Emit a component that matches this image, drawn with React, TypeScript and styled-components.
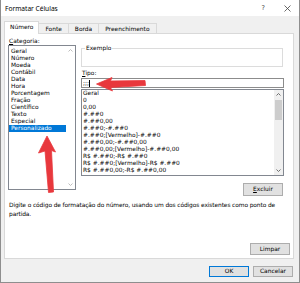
import React from "react";
import styled, { createGlobalStyle } from "styled-components";

const GlobalStyle = createGlobalStyle`
  *, *::before, *::after { box-sizing: border-box; }
  html, body { margin: 0; padding: 0; background: #fff; }
  body {
    font-family: "DejaVu Sans", "Noto Sans", sans-serif;
    font-size: 5.9px;
    color: #000;
  }
`;

const Window = styled.div`
  position: relative;
  width: 300px;
  height: 283px;
  display: flex;
  flex-direction: column;
  border: 1px solid #8e8e8e;
  border-top: none;
  overflow: hidden;
  background: #fff;
`;

const TitleBar = styled.div`
  height: 16px;
  flex: none;
  display: flex;
  align-items: center;
  justify-content: space-between;
  padding: 0 8px 0 4px;
  background: #fff;
`;

const Title = styled.span`
  font-family: "Noto Sans", "DejaVu Sans", sans-serif;
  font-size: 6.6px;
  color: #000;
`;

const TitleButtons = styled.div`
  display: flex;
  align-items: center;
  gap: 19px;
  color: #444;
`;

const Help = styled.span`
  font-size: 6.5px;
  line-height: 7px;
`;

const Body = styled.div`
  flex: 1;
  display: flex;
  flex-direction: column;
  background: #f0f0f0;
  padding: 5px 5px 0 3px;
`;

const TabRow = styled.div`
  position: relative;
  z-index: 1;
  height: 12px;
  display: flex;
  align-items: flex-end;
`;

const Tab = styled.div<{ $active?: boolean }>`
  height: ${(p) => (p.$active ? 13 : 10)}px;
  margin-bottom: ${(p) => (p.$active ? -1 : 0)}px;
  margin-right: -1px;
  padding: ${(p) => (p.$active ? "0 5px 2px" : "0 6px")};
  display: flex;
  align-items: center;
  border: 1px solid #d9d9d9;
  border-bottom: none;
  background: ${(p) => (p.$active ? "#fff" : "#f0f0f0")};
  white-space: nowrap;
`;

const Panel = styled.div`
  height: 226px;
  flex: none;
  display: flex;
  flex-direction: column;
  background: #fff;
  border: 1px solid #d9d9d9;
  padding: 4px 3px 3px 3px;
`;

const Columns = styled.div`
  display: flex;
  gap: 5px;
  margin-right: 6px;
`;

const LeftCol = styled.div`
  width: 68px;
  display: flex;
  flex-direction: column;
`;

const RightCol = styled.div`
  flex: 1;
  display: flex;
  flex-direction: column;
`;

const Label = styled.div<{ $mt?: number }>`
  line-height: 7px;
  height: 7px;
  margin-left: 1px;
  margin-top: ${(p) => p.$mt ?? 0}px;
  u { text-decoration: underline; text-underline-offset: 1px; }
`;

const ListBox = styled.div<{ $h: number; $mt?: number }>`
  height: ${(p) => p.$h}px;
  margin-top: ${(p) => p.$mt ?? 0}px;
  border: 1px solid #828790;
  background: #fff;
  display: flex;
`;

const ListItems = styled.div<{ $padTop: number }>`
  flex: 1;
  padding-top: ${(p) => p.$padTop}px;
  overflow: hidden;
`;

const ListItem = styled.div<{ $selected?: boolean; $pad: number }>`
  height: 7px;
  line-height: 7px;
  padding-left: ${(p) => p.$pad}px;
  white-space: nowrap;
  background: ${(p) => (p.$selected ? "#0078d7" : "transparent")};
  color: ${(p) => (p.$selected ? "#fff" : "#000")};
`;

const ScrollBar = styled.div<{ $bg: string }>`
  width: 9px;
  flex: none;
  display: flex;
  flex-direction: column;
  background: ${(p) => p.$bg};
`;

const ScrollArrow = styled.div`
  height: 9px;
  flex: none;
  display: flex;
  align-items: center;
  justify-content: center;
`;

const Track = styled.div`
  flex: 1;
  padding: 1px 1px 0;
`;

const Thumb = styled.div`
  height: 20px;
  background: #cdcdcd;
`;

const GroupBox = styled.fieldset`
  margin: 7px 1px 0 0;
  padding: 0 2px;
  height: 22px;
  border: 1px solid #dcdcdc;
  min-width: 0;
`;

const Legend = styled.legend`
  padding: 0 1px;
  margin-left: 1px;
  line-height: 7px;
  font-size: 5.9px;
`;

const TextBox = styled.div`
  height: 10px;
  margin-top: 1px;
  border: 1px solid #8c8c8c;
  background: #fff;
  display: flex;
  align-items: center;
  padding-left: 1px;
  line-height: 7px;
`;

const Caret = styled.span`
  display: inline-block;
  width: 1px;
  height: 7px;
  background: #000;
  margin-left: 0.5px;
`;

const ButtonRow = styled.div<{ $mt?: number; $mr?: number }>`
  display: flex;
  justify-content: flex-end;
  gap: 4px;
  margin-top: ${(p) => p.$mt ?? 0}px;
  margin-right: ${(p) => p.$mr ?? 0}px;
`;

const Button = styled.div<{ $h: number; $default?: boolean }>`
  width: 40px;
  height: ${(p) => p.$h}px;
  display: flex;
  align-items: center;
  justify-content: center;
  background: #e1e1e1;
  border: 1px solid ${(p) => (p.$default ? "#0078d7" : "#adadad")};
  line-height: 7px;
  u { text-decoration: underline; text-underline-offset: 1px; }
`;

const Description = styled.p`
  margin: 5px 0 0 1px;
  line-height: 9px;
  letter-spacing: -0.1px;
  white-space: nowrap;
`;

const Spacer = styled.div`
  flex: 1;
`;

const Footer = styled.div`
  flex: 1;
  display: flex;
  justify-content: flex-end;
  align-items: flex-start;
  gap: 4px;
  padding: 7px 1px 0 0;
`;

const Overlay = styled.svg`
  position: absolute;
  left: -1px;
  top: 0;
  pointer-events: none;
`;

const Chevron = ({ up, color }: { up?: boolean; color: string }) => (
  <svg width="5" height="3" viewBox="0 0 5 3">
    <polyline
      points={up ? "0.5,2.5 2.5,0.5 4.5,2.5" : "0.5,0.5 2.5,2.5 4.5,0.5"}
      fill="none"
      stroke={color}
      strokeWidth="0.9"
    />
  </svg>
);

const categories = [
  "Geral",
  "Número",
  "Moeda",
  "Contábil",
  "Data",
  "Hora",
  "Porcentagem",
  "Fração",
  "Científico",
  "Texto",
  "Especial",
  "Personalizado",
];

const formats = [
  "Geral",
  "0",
  "0,00",
  "#.##0",
  "#.##0,00",
  "#.##0;-#.##0",
  "#.##0;[Vermelho]-#.##0",
  "#.##0,00;-#.##0,00",
  "#.##0,00;[Vermelho]-#.##0,00",
  "R$ #.##0;-R$ #.##0",
  "R$ #.##0;[Vermelho]-R$ #.##0",
  "R$ #.##0,00;-R$ #.##0,00",
];

const tabs = ["Número", "Fonte", "Borda", "Preenchimento"];

export default function App() {
  return (
    <>
      <GlobalStyle />
      <Window>
        <TitleBar>
          <Title>Formatar Células</Title>
          <TitleButtons>
            <Help>?</Help>
            <svg width="7" height="7" viewBox="0 0 7 7">
              <line x1="0.5" y1="0.5" x2="6.5" y2="6.5" stroke="#444" strokeWidth="0.8" />
              <line x1="6.5" y1="0.5" x2="0.5" y2="6.5" stroke="#444" strokeWidth="0.8" />
            </svg>
          </TitleButtons>
        </TitleBar>
        <Body>
          <TabRow>
            {tabs.map((t, i) => (
              <Tab key={t} $active={i === 0}>
                {t}
              </Tab>
            ))}
          </TabRow>
          <Panel>
            <Columns>
              <LeftCol>
                <Label>
                  <u>C</u>ategoria:
                </Label>
                <ListBox $h={145}>
                  <ListItems $padTop={2}>
                    {categories.map((c) => (
                      <ListItem key={c} $pad={2} $selected={c === "Personalizado"}>
                        {c}
                      </ListItem>
                    ))}
                  </ListItems>
                  <ScrollBar $bg="#fff">
                    <ScrollArrow>
                      <Chevron up color="#b5b5b5" />
                    </ScrollArrow>
                    <Spacer />
                    <ScrollArrow>
                      <Chevron color="#b5b5b5" />
                    </ScrollArrow>
                  </ScrollBar>
                </ListBox>
              </LeftCol>
              <RightCol>
                <GroupBox>
                  <Legend>Exemplo</Legend>
                </GroupBox>
                <Label $mt={3}>
                  <u>T</u>ipo:
                </Label>
                <TextBox>
                  ;;;
                  <Caret />
                </TextBox>
                <ListBox $h={87} $mt={1}>
                  <ListItems $padTop={0}>
                    {formats.map((f) => (
                      <ListItem key={f} $pad={1}>
                        {f}
                      </ListItem>
                    ))}
                  </ListItems>
                  <ScrollBar $bg="#f0f0f0">
                    <ScrollArrow>
                      <Chevron up color="#606060" />
                    </ScrollArrow>
                    <Track>
                      <Thumb />
                    </Track>
                    <ScrollArrow>
                      <Chevron color="#606060" />
                    </ScrollArrow>
                  </ScrollBar>
                </ListBox>
                <ButtonRow $mt={7} $mr={1}>
                  <Button $h={13}>
                    <span>
                      <u>E</u>xcluir
                    </span>
                  </Button>
                </ButtonRow>
              </RightCol>
            </Columns>
            <Description>
              Digite o código de formatação do número, usando um dos códigos existentes como ponto de
              <br />
              partida.
            </Description>
            <Spacer />
            <ButtonRow>
              <Button $h={12}>Limpar</Button>
            </ButtonRow>
          </Panel>
          <Footer>
            <Button $h={11} $default>
              OK
            </Button>
            <Button $h={11}>Cancelar</Button>
          </Footer>
        </Body>
        <Overlay width="300" height="283" viewBox="0 0 300 283">
          <polygon
            points="96.5,84 112,77.5 110.5,81 145,80.5 145.5,85.5 110.5,87.5 112.5,91"
            fill="#e8383d"
            stroke="#e8383d"
            strokeWidth="0.8"
            strokeLinejoin="round"
          />
          <polygon
            points="47,136 55.5,152 51.5,150.5 53.5,192 48.5,192.5 45,151 38.5,153"
            fill="#e8383d"
            stroke="#e8383d"
            strokeWidth="0.8"
            strokeLinejoin="round"
          />
        </Overlay>
      </Window>
    </>
  );
}
